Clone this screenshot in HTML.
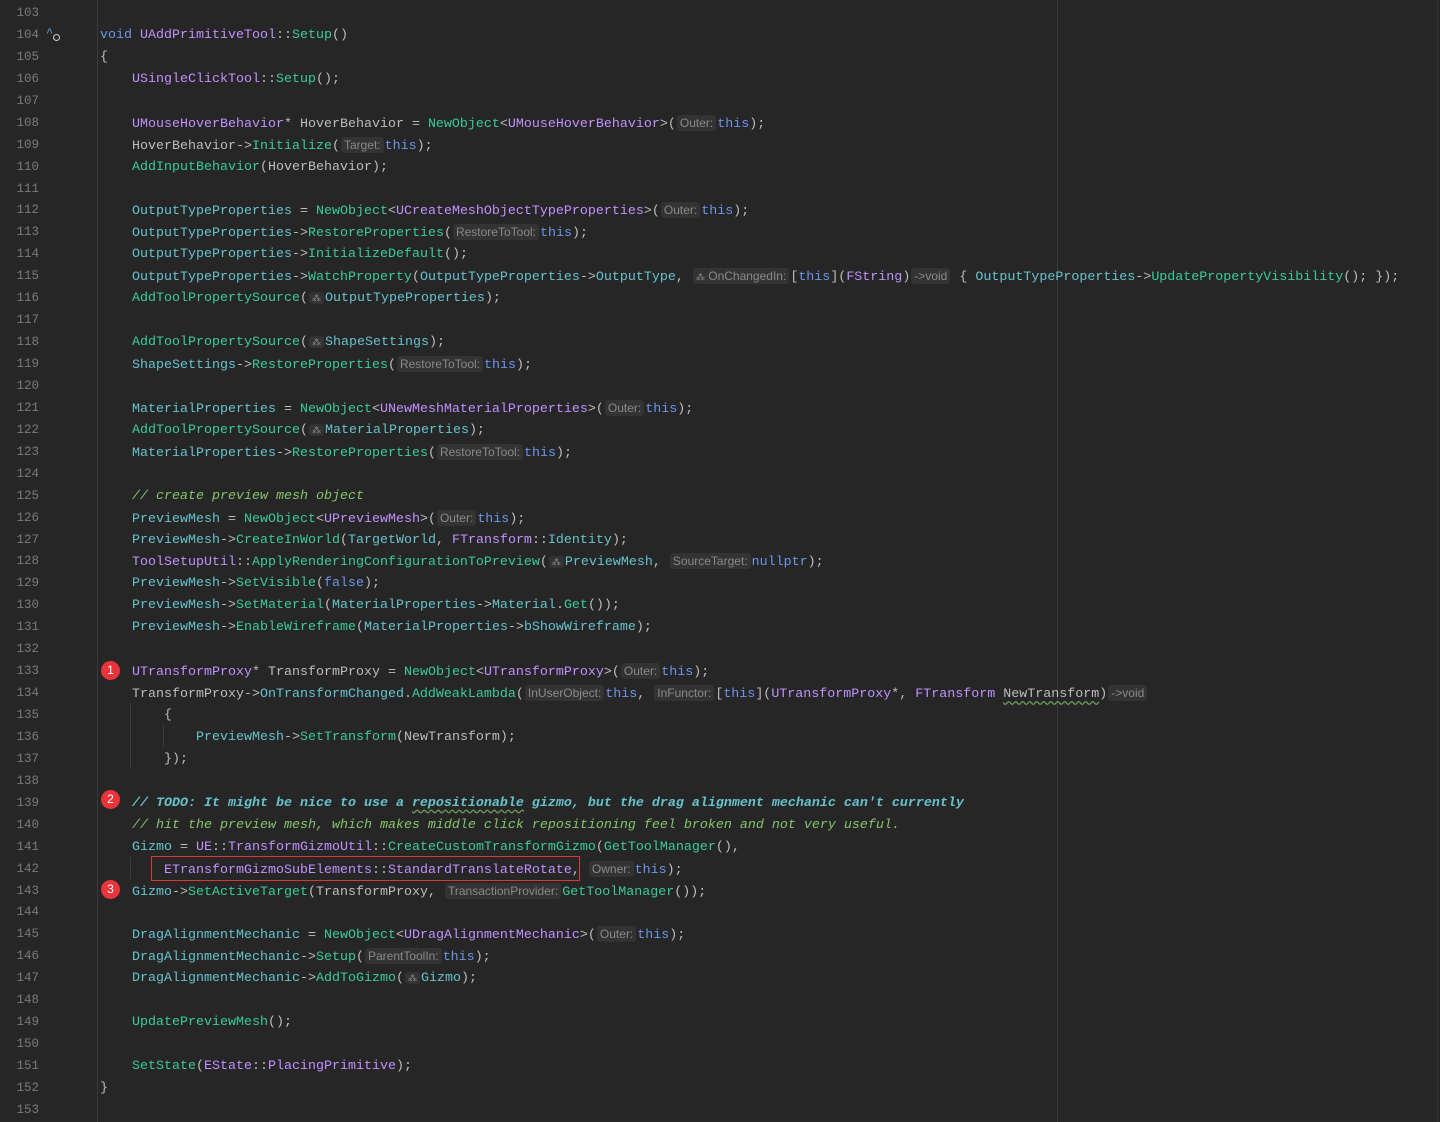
<!DOCTYPE html>
<html><head><meta charset="utf-8"><style>
html,body{margin:0;padding:0;}
body{width:1440px;height:1122px;background:#262626;position:relative;overflow:hidden;font-family:"Liberation Mono",monospace;font-size:13.33px;color:#bdbdbd;}
.g{position:absolute;left:0;top:3px;width:60px;}
.ln{height:21.94px;line-height:21.94px;text-align:right;width:39px;color:#7a7a7a;font-size:12.5px;}
.code{position:absolute;left:100px;top:3px;}
.l{height:21.94px;line-height:21.94px;white-space:pre;}
.k{color:#6c95eb}.t{color:#c191ff}.f{color:#39cc9b}.m{color:#66c3cc}
.c{color:#85c46c;font-style:italic}.td{color:#66c3cc;font-style:italic;font-weight:bold}
.h{font-family:"Liberation Sans",sans-serif;font-size:12px;color:#8a8a8a;background:#333333;border-radius:3px;padding:1px 3px;margin:0 1px;}
.ic{font-size:9px}
.vl{position:absolute;width:1px;background:#3c3c3c;}
.mk{position:absolute;left:101px;width:19px;height:19px;border-radius:50%;background:#e8343a;color:#fff;font-family:"Liberation Sans",sans-serif;font-size:12px;text-align:center;line-height:19px;}
.wv{text-decoration:underline wavy #6a9a5a;text-underline-offset:3px}
</style></head><body>
<div class="vl" style="left:97px;top:0;height:1122px;background:#3a3a3a"></div>
<div class="vl" style="left:1057px;top:0;height:1122px;background:#393939"></div>
<div class="vl" style="left:1437px;top:0;height:1122px;background:#333"></div>
<div class="vl" style="left:130px;top:703px;height:66px"></div>
<div class="vl" style="left:163px;top:725px;height:22px"></div>
<div class="vl" style="left:130px;top:857px;height:22px"></div>
<div style="position:absolute;left:151px;top:856px;width:429px;height:25px;border:1px solid #d83a3a;box-sizing:border-box"></div>
<div class="mk" style="top:661px">1</div>
<div class="mk" style="top:790px">2</div>
<div class="mk" style="top:880px">3</div>
<div style="position:absolute;left:46px;top:26px;color:#5aa0d8;font-size:12px;">^</div>
<div style="position:absolute;left:53px;top:34px;width:5px;height:5px;border:1.5px solid #ccc;border-radius:50%"></div>
<div class="g">
<div class="ln">103</div><div class="ln">104</div><div class="ln">105</div><div class="ln">106</div><div class="ln">107</div><div class="ln">108</div><div class="ln">109</div><div class="ln">110</div><div class="ln">111</div><div class="ln">112</div><div class="ln">113</div><div class="ln">114</div><div class="ln">115</div><div class="ln">116</div><div class="ln">117</div><div class="ln">118</div><div class="ln">119</div><div class="ln">120</div><div class="ln">121</div><div class="ln">122</div><div class="ln">123</div><div class="ln">124</div><div class="ln">125</div><div class="ln">126</div><div class="ln">127</div><div class="ln">128</div><div class="ln">129</div><div class="ln">130</div><div class="ln">131</div><div class="ln">132</div><div class="ln">133</div><div class="ln">134</div><div class="ln">135</div><div class="ln">136</div><div class="ln">137</div><div class="ln">138</div><div class="ln">139</div><div class="ln">140</div><div class="ln">141</div><div class="ln">142</div><div class="ln">143</div><div class="ln">144</div><div class="ln">145</div><div class="ln">146</div><div class="ln">147</div><div class="ln">148</div><div class="ln">149</div><div class="ln">150</div><div class="ln">151</div><div class="ln">152</div><div class="ln">153</div>
</div>
<div class="code">
<div class="l"> </div>
<div class="l"><span class="k">void</span> <span class="t">UAddPrimitiveTool</span>::<span class="f">Setup</span>()</div>
<div class="l">{</div>
<div class="l">    <span class="t">USingleClickTool</span>::<span class="f">Setup</span>();</div>
<div class="l"> </div>
<div class="l">    <span class="t">UMouseHoverBehavior</span>* HoverBehavior = <span class="f">NewObject</span>&lt;<span class="t">UMouseHoverBehavior</span>&gt;(<span class="h">Outer:</span><span class="k">this</span>);</div>
<div class="l">    HoverBehavior-&gt;<span class="f">Initialize</span>(<span class="h">Target:</span><span class="k">this</span>);</div>
<div class="l">    <span class="f">AddInputBehavior</span>(HoverBehavior);</div>
<div class="l"> </div>
<div class="l">    <span class="m">OutputTypeProperties</span> = <span class="f">NewObject</span>&lt;<span class="t">UCreateMeshObjectTypeProperties</span>&gt;(<span class="h">Outer:</span><span class="k">this</span>);</div>
<div class="l">    <span class="m">OutputTypeProperties</span>-&gt;<span class="f">RestoreProperties</span>(<span class="h">RestoreToTool:</span><span class="k">this</span>);</div>
<div class="l">    <span class="m">OutputTypeProperties</span>-&gt;<span class="f">InitializeDefault</span>();</div>
<div class="l">    <span class="m">OutputTypeProperties</span>-&gt;<span class="f">WatchProperty</span>(<span class="m">OutputTypeProperties</span>-&gt;<span class="m">OutputType</span>, <span class="h"><span class="ic">⁂</span> OnChangedIn:</span>[<span class="k">this</span>](<span class="t">FString</span>)<span class="h">-&gt;void</span> { <span class="m">OutputTypeProperties</span>-&gt;<span class="f">UpdatePropertyVisibility</span>(); });</div>
<div class="l">    <span class="f">AddToolPropertySource</span>(<span class="h ic">⁂</span><span class="m">OutputTypeProperties</span>);</div>
<div class="l"> </div>
<div class="l">    <span class="f">AddToolPropertySource</span>(<span class="h ic">⁂</span><span class="m">ShapeSettings</span>);</div>
<div class="l">    <span class="m">ShapeSettings</span>-&gt;<span class="f">RestoreProperties</span>(<span class="h">RestoreToTool:</span><span class="k">this</span>);</div>
<div class="l"> </div>
<div class="l">    <span class="m">MaterialProperties</span> = <span class="f">NewObject</span>&lt;<span class="t">UNewMeshMaterialProperties</span>&gt;(<span class="h">Outer:</span><span class="k">this</span>);</div>
<div class="l">    <span class="f">AddToolPropertySource</span>(<span class="h ic">⁂</span><span class="m">MaterialProperties</span>);</div>
<div class="l">    <span class="m">MaterialProperties</span>-&gt;<span class="f">RestoreProperties</span>(<span class="h">RestoreToTool:</span><span class="k">this</span>);</div>
<div class="l"> </div>
<div class="l">    <span class="c">// create preview mesh object</span></div>
<div class="l">    <span class="m">PreviewMesh</span> = <span class="f">NewObject</span>&lt;<span class="t">UPreviewMesh</span>&gt;(<span class="h">Outer:</span><span class="k">this</span>);</div>
<div class="l">    <span class="m">PreviewMesh</span>-&gt;<span class="f">CreateInWorld</span>(<span class="m">TargetWorld</span>, <span class="t">FTransform</span>::<span class="m">Identity</span>);</div>
<div class="l">    <span class="t">ToolSetupUtil</span>::<span class="f">ApplyRenderingConfigurationToPreview</span>(<span class="h ic">⁂</span><span class="m">PreviewMesh</span>, <span class="h">SourceTarget:</span><span class="k">nullptr</span>);</div>
<div class="l">    <span class="m">PreviewMesh</span>-&gt;<span class="f">SetVisible</span>(<span class="k">false</span>);</div>
<div class="l">    <span class="m">PreviewMesh</span>-&gt;<span class="f">SetMaterial</span>(<span class="m">MaterialProperties</span>-&gt;<span class="m">Material</span>.<span class="f">Get</span>());</div>
<div class="l">    <span class="m">PreviewMesh</span>-&gt;<span class="f">EnableWireframe</span>(<span class="m">MaterialProperties</span>-&gt;<span class="m">bShowWireframe</span>);</div>
<div class="l"> </div>
<div class="l">    <span class="t">UTransformProxy</span>* TransformProxy = <span class="f">NewObject</span>&lt;<span class="t">UTransformProxy</span>&gt;(<span class="h">Outer:</span><span class="k">this</span>);</div>
<div class="l">    TransformProxy-&gt;<span class="m">OnTransformChanged</span>.<span class="f">AddWeakLambda</span>(<span class="h">InUserObject:</span><span class="k">this</span>, <span class="h">InFunctor:</span>[<span class="k">this</span>](<span class="t">UTransformProxy</span>*, <span class="t">FTransform</span> <span class="wv">NewTransform</span>)<span class="h">-&gt;void</span></div>
<div class="l">        {</div>
<div class="l">            <span class="m">PreviewMesh</span>-&gt;<span class="f">SetTransform</span>(NewTransform);</div>
<div class="l">        });</div>
<div class="l"> </div>
<div class="l">    <span class="td">// TODO: It might be nice to use a <span class="wv">repositionable</span> gizmo, but the drag alignment mechanic can't currently</span></div>
<div class="l">    <span class="c">// hit the preview mesh, which makes middle click repositioning feel broken and not very useful.</span></div>
<div class="l">    <span class="m">Gizmo</span> = <span class="t">UE</span>::<span class="t">TransformGizmoUtil</span>::<span class="f">CreateCustomTransformGizmo</span>(<span class="f">GetToolManager</span>(),</div>
<div class="l">        <span class="t">ETransformGizmoSubElements</span>::<span class="t">StandardTranslateRotate</span>, <span class="h">Owner:</span><span class="k">this</span>);</div>
<div class="l">    <span class="m">Gizmo</span>-&gt;<span class="f">SetActiveTarget</span>(TransformProxy, <span class="h">TransactionProvider:</span><span class="f">GetToolManager</span>());</div>
<div class="l"> </div>
<div class="l">    <span class="m">DragAlignmentMechanic</span> = <span class="f">NewObject</span>&lt;<span class="t">UDragAlignmentMechanic</span>&gt;(<span class="h">Outer:</span><span class="k">this</span>);</div>
<div class="l">    <span class="m">DragAlignmentMechanic</span>-&gt;<span class="f">Setup</span>(<span class="h">ParentToolIn:</span><span class="k">this</span>);</div>
<div class="l">    <span class="m">DragAlignmentMechanic</span>-&gt;<span class="f">AddToGizmo</span>(<span class="h ic">⁂</span><span class="m">Gizmo</span>);</div>
<div class="l"> </div>
<div class="l">    <span class="f">UpdatePreviewMesh</span>();</div>
<div class="l"> </div>
<div class="l">    <span class="f">SetState</span>(<span class="t">EState</span>::<span class="t">PlacingPrimitive</span>);</div>
<div class="l">}</div>
<div class="l"> </div>
</div>
</body></html>
